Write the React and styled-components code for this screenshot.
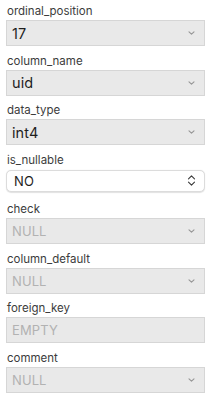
import React from "react";
import styled, { createGlobalStyle } from "styled-components";

const Global = createGlobalStyle`
  html, body { margin: 0; padding: 0; background: #ffffff; }
  body { font-family: Inter, "Noto Sans", sans-serif; -webkit-font-smoothing: antialiased; }
`;

const Panel = styled.div`
  width: 212px;
  padding: 5px 7px 0 6px;
  box-sizing: border-box;
  display: flex;
  flex-direction: column;
`;

const Field = styled.div`
  display: flex;
  flex-direction: column;
  height: 49.5px;
`;

const Label = styled.div`
  height: 13px;
  line-height: 13px;
  padding-left: 1px;
  font-size: 11.5px;
  font-weight: 400;
  color: #3c3c3c;
  margin-bottom: 2px;
  white-space: nowrap;
`;

const Box = styled.div`
  height: 26px;
  box-sizing: border-box;
  display: flex;
  align-items: center;
  justify-content: space-between;
  padding: 0 8px 0 ${(p) => (p.$variant === "popup" ? "7px" : "5px")};
  border: 1px solid ${(p) => (p.$variant === "popup" ? "#dcdcdc" : "#d6d6d6")};
  border-radius: ${(p) => (p.$variant === "popup" ? "5px" : "0")};
  background: ${(p) => (p.$variant === "popup" ? "#ffffff" : "#e9e9e9")};
  box-shadow: ${(p) => (p.$variant === "popup" ? "0 0.5px 1px rgba(0,0,0,0.12)" : "none")};
  ${(p) => (p.$variant === "popup" ? "height: 22px; margin-top: 1px;" : "")}
`;

const Value = styled.span`
  font-size: ${(p) => (p.$muted ? "13px" : p.$variant === "popup" ? "13px" : "14.5px")};
  color: ${(p) => (p.$muted ? "#b2b2b2" : "#1e1e1e")};
  font-weight: 400;
  letter-spacing: 0.1px;
`;

const Icon = styled.svg`
  flex: none;
  display: block;
`;

const Chevron = () => (
  <Icon width="9" height="6" viewBox="0 0 9 6">
    <path d="M2 1.8 L4.5 4.2 L7 1.8" fill="none" stroke="#959595" strokeWidth="1.1" strokeLinecap="round" strokeLinejoin="round" />
  </Icon>
);

const UpDown = () => (
  <Icon width="9" height="13" viewBox="0 0 9 13">
    <path d="M1.5 4.8 L4.5 1.8 L7.5 4.8" fill="none" stroke="#3a3a3a" strokeWidth="1.1" strokeLinecap="round" strokeLinejoin="round" />
    <path d="M1.5 8.2 L4.5 11.2 L7.5 8.2" fill="none" stroke="#3a3a3a" strokeWidth="1.1" strokeLinecap="round" strokeLinejoin="round" />
  </Icon>
);

const fields = [
  { label: "ordinal_position", value: "17", kind: "combo" },
  { label: "column_name", value: "uid", kind: "combo" },
  { label: "data_type", value: "int4", kind: "combo" },
  { label: "is_nullable", value: "NO", kind: "popup" },
  { label: "check", value: "NULL", kind: "combo", muted: true },
  { label: "column_default", value: "NULL", kind: "combo", muted: true },
  { label: "foreign_key", value: "EMPTY", kind: "text", muted: true },
  { label: "comment", value: "NULL", kind: "combo", muted: true },
];

export default function App() {
  return (
    <>
      <Global />
      <Panel>
        {fields.map((f) => (
          <Field key={f.label}>
            <Label>{f.label}</Label>
            <Box $variant={f.kind === "popup" ? "popup" : "combo"}>
              <Value $muted={f.muted} $variant={f.kind}>{f.value}</Value>
              {f.kind === "combo" && <Chevron />}
              {f.kind === "popup" && <UpDown />}
            </Box>
          </Field>
        ))}
      </Panel>
    </>
  );
}
